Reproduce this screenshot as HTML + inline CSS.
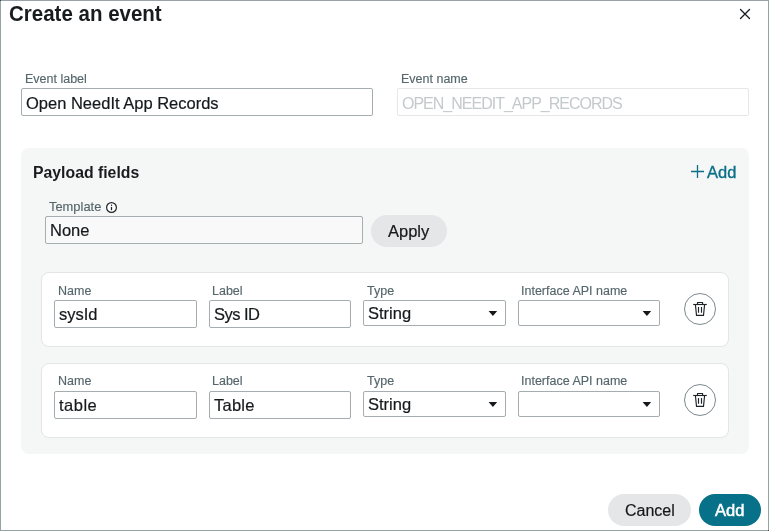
<!DOCTYPE html>
<html><head><meta charset="utf-8">
<style>
*{box-sizing:border-box;margin:0;padding:0}
html,body{width:769px;height:531px;overflow:hidden;background:#fff}
body{font-family:"Liberation Sans",sans-serif;color:#1d2327;position:relative;-webkit-font-smoothing:antialiased}
.frame{position:absolute;left:0;top:0;width:769px;height:531px;border:1px solid #97a2a8;z-index:5}
.px{position:absolute;width:1px;height:1px;background:#3a4c5a;z-index:6}
.a{position:absolute;white-space:nowrap;will-change:transform}
.title{left:9px;top:2px;font-size:20.5px;font-weight:bold;line-height:24px;color:#181c1f;transform:scaleY(1.05);transform-origin:0 19px}
.lbl{font-size:12.5px;line-height:14px;color:#55666b;-webkit-text-stroke:0.15px #55666b}
.inp{position:absolute;border:1px solid #a5adb0;border-radius:2px;background:#fff}
.val{font-size:16.5px;line-height:18px;color:#15191c;-webkit-text-stroke:0.2px #15191c}
.panel{position:absolute;left:21px;top:148px;width:728px;height:306px;background:#f5f6f6;border-radius:8px}
.card{position:absolute;left:41px;width:688px;height:75px;background:#fff;border:1px solid #e3e5e6;border-radius:8px}
.sel{position:absolute;border:1px solid #a5adb0;border-radius:2px;background:#fff;height:26px}
.arr{position:absolute;width:0;height:0;border-left:5px solid transparent;border-right:5px solid transparent;border-top:5px solid #16191b}
.trash{position:absolute;width:32px;height:32px;border:1px solid #7f8b90;border-radius:50%;background:#fff}
.btn{position:absolute;height:32px;border-radius:16px}
</style></head><body>
<div class="frame"></div><div class="px" style="left:0;top:0"></div><div class="px" style="left:768px;top:530px"></div>
<div class="a title">Create an event</div>
<svg class="a" style="left:738px;top:7px" width="14" height="14" viewBox="0 0 14 14"><path d="M2.5 2.5L11.5 11.5M11.5 2.5L2.5 11.5" stroke="#16191b" stroke-width="1.25" stroke-linecap="round" fill="none"/></svg>

<div class="a lbl" style="left:25px;top:72px">Event label</div>
<div class="inp" style="left:21px;top:88px;width:352px;height:28px"></div>
<div class="a val" style="left:26px;top:94px">Open NeedIt App Records</div>

<div class="a lbl" style="left:401px;top:72px">Event name</div>
<div class="inp" style="left:397px;top:88px;width:352px;height:28px;border-color:#e5e8e8"></div>
<div class="a val" style="left:402px;top:95px;color:#c4c9cb;letter-spacing:-1px;font-size:16px;-webkit-text-stroke:0px">OPEN_NEEDIT_APP_RECORDS</div>

<div class="panel"></div>
<div class="a" style="left:33px;top:164px;font-size:15.8px;line-height:18px;font-weight:bold;color:#181c1f">Payload fields</div>
<svg class="a" style="left:690px;top:164px" width="15" height="15" viewBox="0 0 15 15"><path d="M7.5 1V14M1 7.5H14" stroke="#0b6f87" stroke-width="1.3" fill="none"/></svg>
<div class="a" style="left:707px;top:163px;font-size:16.5px;line-height:18px;color:#0b6f87;-webkit-text-stroke:0.35px #0b6f87">Add</div>

<div class="a lbl" style="left:49px;top:200px;font-size:12.9px">Template</div>
<svg class="a" style="left:105px;top:201px" width="13" height="13" viewBox="0 0 13 13"><circle cx="6.5" cy="6.5" r="4.9" stroke="#1d2327" stroke-width="1.2" fill="#fff"/><path d="M6.5 5.9V9.2" stroke="#1d2327" stroke-width="1.3"/><circle cx="6.5" cy="4.2" r="0.75" fill="#1d2327"/></svg>
<div class="inp" style="left:45px;top:216px;width:318px;height:28px;background:#f9f9f9"></div>
<div class="a val" style="left:50px;top:221px">None</div>
<div class="btn" style="left:371px;top:215px;width:76px;background:#e4e6e7"></div>
<div class="a val" style="left:388px;top:222px">Apply</div>

<!-- row 1 -->
<div class="card" style="top:272px"></div>
<div class="a lbl" style="left:58px;top:284px">Name</div>
<div class="inp" style="left:54px;top:300px;width:143px;height:28px"></div>
<div class="a val" style="left:59px;top:305px">sysId</div>
<div class="a lbl" style="left:212px;top:284px">Label</div>
<div class="inp" style="left:209px;top:300px;width:142px;height:28px"></div>
<div class="a val" style="left:214px;top:305px;letter-spacing:-0.55px">Sys ID</div>
<div class="a lbl" style="left:367px;top:284px">Type</div>
<div class="sel" style="left:363px;top:300px;width:143px"></div>
<div class="a val" style="left:368px;top:304px">String</div>
<svg class="a" style="left:488px;top:310px" width="10" height="7" viewBox="0 0 10 7"><path d="M0.6 1H9.2L4.9 5.9Z" fill="#16191b"/></svg>
<div class="a lbl" style="left:521px;top:284px">Interface API name</div>
<div class="sel" style="left:518px;top:300px;width:142px"></div>
<svg class="a" style="left:642px;top:310px" width="10" height="7" viewBox="0 0 10 7"><path d="M0.6 1H9.2L4.9 5.9Z" fill="#16191b"/></svg>
<svg class="a" style="left:684px;top:293px" width="32" height="32" viewBox="0 0 32 32"><circle cx="16" cy="16" r="15.5" stroke="#7d898e" stroke-width="1" fill="#fff"/><g stroke="#1d2327" stroke-width="1.15" fill="none" stroke-linejoin="round"><path d="M9.2 11.5H22.8"/><path d="M13.5 11.5V9.5H18.6V11.5"/><path d="M11.4 11.5L12.5 22.4H19.5L20.6 11.5"/><path d="M14.5 14.1V19.7M17.5 14.1V19.7"/></g></svg>

<!-- row 2 -->
<div class="card" style="top:363px"></div>
<div class="a lbl" style="left:58px;top:374px">Name</div>
<div class="inp" style="left:54px;top:391px;width:143px;height:28px"></div>
<div class="a val" style="left:59px;top:396px;letter-spacing:0.5px">table</div>
<div class="a lbl" style="left:212px;top:374px">Label</div>
<div class="inp" style="left:209px;top:391px;width:142px;height:28px"></div>
<div class="a val" style="left:214px;top:396px;letter-spacing:0.25px">Table</div>
<div class="a lbl" style="left:367px;top:374px">Type</div>
<div class="sel" style="left:363px;top:391px;width:143px"></div>
<div class="a val" style="left:368px;top:395px">String</div>
<svg class="a" style="left:488px;top:401px" width="10" height="7" viewBox="0 0 10 7"><path d="M0.6 1H9.2L4.9 5.9Z" fill="#16191b"/></svg>
<div class="a lbl" style="left:521px;top:374px">Interface API name</div>
<div class="sel" style="left:518px;top:391px;width:142px"></div>
<svg class="a" style="left:642px;top:401px" width="10" height="7" viewBox="0 0 10 7"><path d="M0.6 1H9.2L4.9 5.9Z" fill="#16191b"/></svg>
<svg class="a" style="left:684px;top:384px" width="32" height="32" viewBox="0 0 32 32"><circle cx="16" cy="16" r="15.5" stroke="#7d898e" stroke-width="1" fill="#fff"/><g stroke="#1d2327" stroke-width="1.15" fill="none" stroke-linejoin="round"><path d="M9.2 11.5H22.8"/><path d="M13.5 11.5V9.5H18.6V11.5"/><path d="M11.4 11.5L12.5 22.4H19.5L20.6 11.5"/><path d="M14.5 14.1V19.7M17.5 14.1V19.7"/></g></svg>

<div class="btn" style="left:608px;top:494px;width:83px;background:#e4e6e7"></div>
<div class="a val" style="left:625px;top:502px;font-size:16px">Cancel</div>
<div class="btn" style="left:699px;top:494px;width:62px;background:#067189"></div>
<div class="a val" style="left:715px;top:501px;color:#fff;-webkit-text-stroke:0.5px #fff">Add</div>
</body></html>
